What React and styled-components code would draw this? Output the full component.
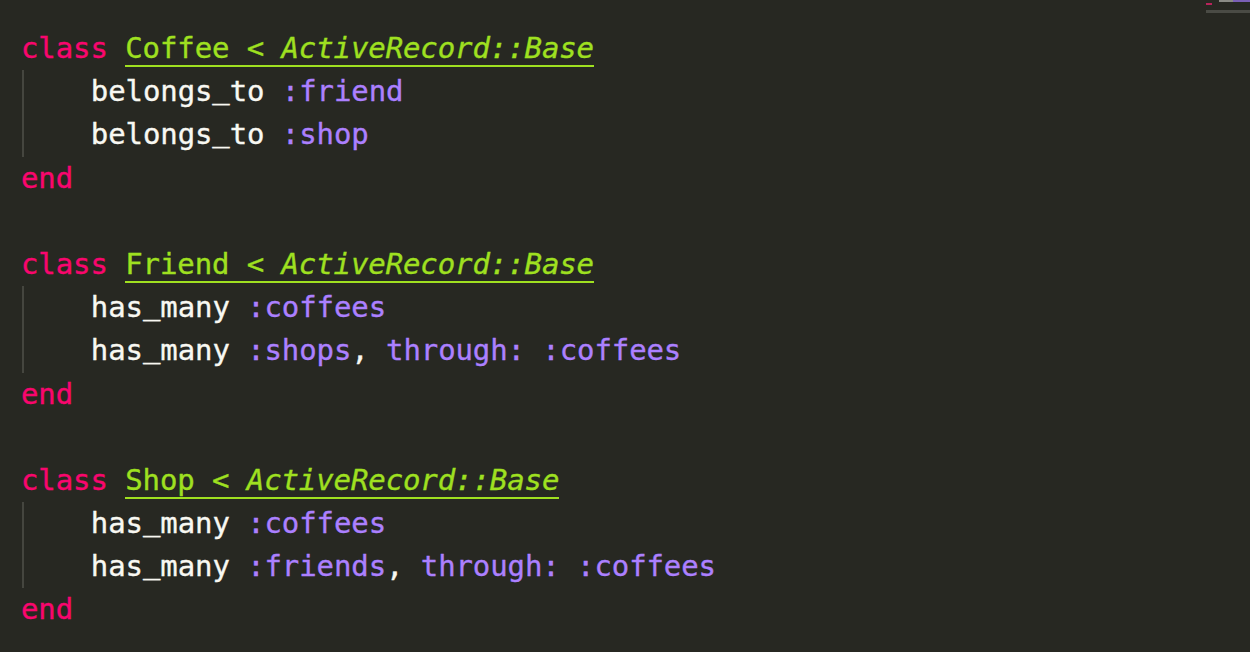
import React from "react";
import styled, { createGlobalStyle } from "styled-components";

const Global = createGlobalStyle`
  html, body { margin: 0; padding: 0; background: #272822; }
  body { width: 1250px; height: 652px; overflow: hidden; }
`;

const Editor = styled.div`
  position: relative;
  width: 1250px;
  height: 652px;
  box-sizing: border-box;
  padding: 27px 0 0 21px;
  background: #272822;
  font-family: "DejaVu Sans Mono", "Liberation Mono", monospace;
  font-size: 29px;
  letter-spacing: -0.1px;
  line-height: 43.2px;
  color: #f8f8f2;
  white-space: pre;
  -webkit-text-stroke: 0.35px currentColor;
`;

const Line = styled.div`
  height: 43.2px;
`;

const Block = styled.div`
  margin-left: 1px;
  border-left: 2px solid #45463f;
  padding-left: calc(4ch - 3px);
`;

const Kw = styled.span`
  color: #f9066e;
`;

const Entity = styled.span`
  color: #9fe020;
  border-bottom: 2px solid #9fe020;
`;

const Inherit = styled.span`
  font-style: italic;
`;

const Sym = styled.span`
  color: #ac80ff;
`;

const Under = styled.span`
  position: relative;
  top: -3px;
`;

const Minimap = styled.div`
  position: absolute;
  top: 0;
  right: 0;
  width: 45px;
  height: 16px;
  -webkit-text-stroke: 0;
`;

const MiniBar = styled.div`
  position: absolute;
  left: ${(p) => p.$x}px;
  top: ${(p) => p.$y}px;
  width: ${(p) => p.$w}px;
  height: ${(p) => p.$h}px;
  background: ${(p) => p.$c};
`;

function Ident({ text }) {
  const parts = text.split("_");
  return parts.map((p, i) => (
    <React.Fragment key={i}>
      {i > 0 && <Under>_</Under>}
      {p}
    </React.Fragment>
  ));
}

function ClassLine({ name }) {
  return (
    <Line>
      <Kw>class</Kw>{" "}
      <Entity>
        {name} {"<"} <Inherit>ActiveRecord::Base</Inherit>
      </Entity>
    </Line>
  );
}

function Assoc({ method, target, through }) {
  return (
    <Line>
      <Ident text={method} /> <Sym>:{target}</Sym>
      {through && (
        <>
          , <Sym>through:</Sym> <Sym>:{through}</Sym>
        </>
      )}
    </Line>
  );
}

const End = () => (
  <Line>
    <Kw>end</Kw>
  </Line>
);

export default function App() {
  return (
    <>
      <Global />
      <Editor>
        <ClassLine name="Coffee" />
        <Block>
          <Assoc method="belongs_to" target="friend" />
          <Assoc method="belongs_to" target="shop" />
        </Block>
        <End />
        <Line />
        <ClassLine name="Friend" />
        <Block>
          <Assoc method="has_many" target="coffees" />
          <Assoc method="has_many" target="shops" through="coffees" />
        </Block>
        <End />
        <Line />
        <ClassLine name="Shop" />
        <Block>
          <Assoc method="has_many" target="coffees" />
          <Assoc method="has_many" target="friends" through="coffees" />
        </Block>
        <End />
        <Minimap>
          <MiniBar $x={14} $y={0} $w={14} $h={2} $c="#8a8a85" />
          <MiniBar $x={28} $y={0} $w={17} $h={2} $c="#7a5fb5" />
          <MiniBar $x={1} $y={3} $w={6} $h={2} $c="#b8235a" />
          <MiniBar $x={1} $y={10} $w={44} $h={3} $c="#4a4b45" />
        </Minimap>
      </Editor>
    </>
  );
}
